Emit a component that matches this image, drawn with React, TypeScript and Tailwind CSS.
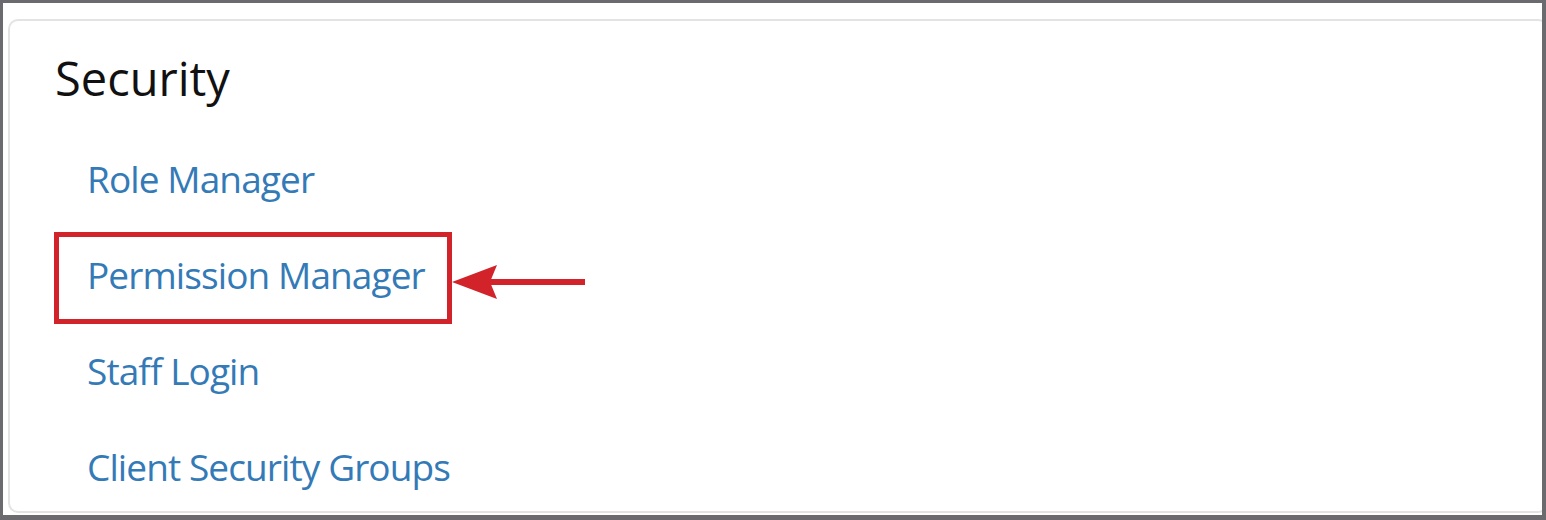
import React from "react";

export default function App() {
  const links = ["Role Manager", "Permission Manager", "Staff Login", "Client Security Groups"];
  return (
    <div className="w-[1546px] h-[520px] bg-[#6b6b6f] pt-[3px] pl-[3px] overflow-hidden">
      <div className="w-[1539px] h-[512px] bg-white overflow-hidden pt-[16px] pl-[5px]">
        <div
          className="relative w-[1540px] h-[494px] border-2 border-[#e3e3e3] rounded-[10px] pt-[34px] pl-[45px]"
          style={{ fontFamily: '"Open Sans", "Noto Sans", sans-serif' }}
        >
          <div className="text-[47px] leading-[47px] text-[#111111]">Security</div>
          <div className="mt-[53px] ml-[32px] flex flex-col gap-[48px]">
            {links.map((l) => (
              <a
                key={l}
                className="block h-[48px] text-[37px] leading-[48px] tracking-[-0.9px] text-[#337ab7]"
              >
                {l}
              </a>
            ))}
          </div>
          <div className="absolute left-[44px] top-[211px] w-[398px] h-[92px] border-[5px] border-[#d2232a]" />
          <svg
            className="absolute left-[440px] top-[241px]"
            width="140"
            height="40"
            viewBox="0 0 140 40"
          >
            <polygon points="2,20 47,3 40,20 47,37" fill="#d2232a" />
            <rect x="39" y="17" width="96" height="6" fill="#d2232a" />
          </svg>
        </div>
      </div>
    </div>
  );
}
